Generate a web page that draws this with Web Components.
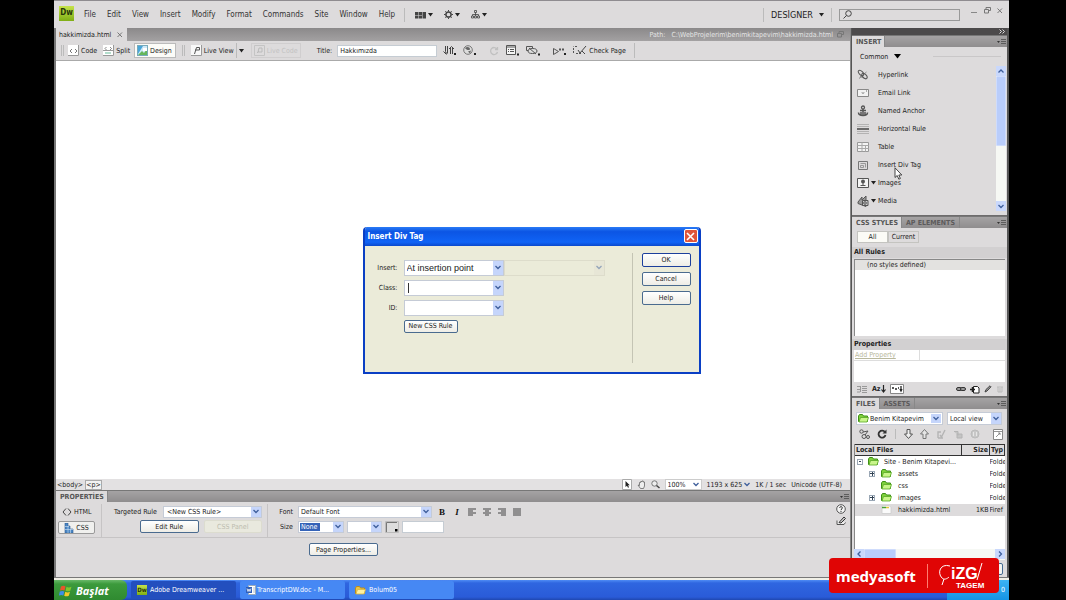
<!DOCTYPE html>
<html lang="tr">
<head>
<meta charset="utf-8">
<title>Adobe Dreamweaver - hakkimizda.html</title>
<style>
html, body { margin: 0; height: 100%; background: #000; }
</style>
</head>
<body>
<dw-desktop></dw-desktop>
<script>
const BASE = `
  *, *::before, *::after { box-sizing: border-box; }
  button, input, select { font: inherit; color: inherit; margin: 0; padding: 0; border: 0; background: none; border-radius: 0; outline: 0; }
  button { white-space: nowrap; display: flex; align-items: center; justify-content: center; gap: 2px; }
  label, a { color: inherit; text-decoration: none; white-space: nowrap; }
  dw-icon { flex: none; }
`;

function define(name, css, render) {
  customElements.define(name, class extends HTMLElement {
    connectedCallback() {
      if (this.shadowRoot) return;
      const root = this.attachShadow({ mode: "open" });
      root.innerHTML = `<style>${BASE}${css}</style>${typeof render === "function" ? render(this) : render}`;
    }
  });
}

const esc = s => s.replace(/&/g, "&amp;").replace(/</g, "&lt;").replace(/"/g, "&quot;");

const S = (w, h, body) => `<svg width="${w}" height="${h}" viewBox="0 0 ${w} ${h}" fill="none" stroke="#555" stroke-width="1">${body}</svg>`;
const ICONS = {
  tri: S(5, 4, '<path d="M0 0h5L2.5 3.5z" fill="#222" stroke="none"/>'),
  bigtri: S(7, 5, '<path d="M0 0h7L3.5 4.5z" fill="#000" stroke="none"/>'),
  layout: S(11, 8, '<path d="M0 1h3.5v3H0zM0 4.500h3.500v3H0zM4 1h3v3H4zM4 4.500h3v3H4zM7.500 1h3.500v6.500H7.500z" fill="#444" stroke="none"/>'),
  gear: S(9, 9, '<circle cx="4.500" cy="4.500" r="2.600" stroke-width="1.500" stroke="#444"/><path d="M4.500 0v1.500M4.500 7.500V9M0 4.500h1.500M7.500 4.500H9M1.300 1.300l1 1M6.700 6.700l1 1M7.700 1.300l-1 1M2.300 6.700l-1 1" stroke="#444"/>'),
  sitemap: S(9, 9, '<path d="M3.500 .5h2v2h-2zM.5 6h2v2h-2zM3.500 6h2v2h-2zM6.500 6h2v2h-2zM4.500 2.500V6M1.500 6V4.500h6V6" stroke="#444" stroke-width=".8"/>'),
  search: S(9, 9, '<circle cx="5.500" cy="3.500" r="2.800" stroke="#444"/><path d="M3.500 5.500L.5 8.500" stroke="#444"/>'),
  min: S(7, 7, '<path d="M0 5.500h6" stroke="#888"/>'),
  restore: S(7, 7, '<path d="M2 2.500V.5h4.500v3H5M.5 2.500h4v3.500h-4z" stroke="#777"/>'),
  close: S(6, 6, '<path d="M.5 .5l4.500 4.500M5 .5L.5 5" stroke="#777"/>'),
  code: S(11, 11, '<rect width="11" height="11" fill="#fff" stroke="none"/><path d="M10.500 0v10.500H0" stroke="#999"/><path d="M4 4L2 6l2 2M7 4l2 2-2 2" stroke="#555" stroke-width=".8"/>'),
  split: S(11, 11, '<rect width="11" height="11" fill="#fff" stroke="none"/><path d="M10.500 0v10.500H0M0 5.500h11" stroke="#999"/><path d="M3.500 2L2 3.500 3.500 5M7 2l1.500 1.500L7 5" stroke-width=".7"/><path d="M2 8h6" stroke="#6b9"/>'),
  design: S(11, 11, '<rect x=".5" y=".5" width="10" height="10" fill="#cfe9f7" stroke="#7ab"/><path d="M1 1h5L1 9z" fill="#4aa6d8" stroke="none"/><path d="M1 10l4-4 2 2 3-4v6z" fill="#65b65c" stroke="none"/><path d="M6 3h4v3H6z" fill="#fff" stroke="none"/>'),
  live: S(11, 11, '<rect width="11" height="11" fill="#f8f8f8" stroke="none"/><path d="M10.500 0v10.500H0" stroke="#999"/><path d="M5.500 2.500h3v2.500H4M5.500 2.500L3.500 9"/>'),
  livecode: S(11, 11, '<path d="M.5 .5h10v10H.5z" stroke="#c4c4c4"/><path d="M5 3h3v4H4zM3 8l2-2" stroke="#bbb"/>'),
  updown: S(13, 11, '<path d="M2.500 1v5.500a2 2 0 0 0 2 2M4.500 1v7M.5 6.500l3 3M7.500 9V2.500M9.500 9V2.500M6 4l2.500-2.500L11 4" stroke="#444"/><path d="M11 8h2v2h-2z" fill="#222" stroke="none"/>'),
  globe: S(13, 11, '<circle cx="5" cy="5" r="4.300" fill="#ddd" stroke="#777"/><path d="M2 3c2-2 5-1 5 1S3 5 2 3zM5 6.500l3-1-1 3z" fill="#666" stroke="none"/><path d="M11 8h2v2h-2z" fill="#222" stroke="none"/>'),
  refreshOff: S(10, 10, '<path d="M8 3a3.500 3.500 0 1 0 .5 3M8.500 1v2.500H6" stroke="#c0c0c0" stroke-width="1.300"/>'),
  viewopts: S(13, 11, '<path d="M.5 .5h9v9h-9zM.5 2h9" fill="#f4f4f4"/><path d="M2 4.500h1M4 4.500h4M2 6.500h1M4 6.500h4"/><path d="M11 8.500h2v2h-2z" fill="#222" stroke="none"/>'),
  visual: S(14, 11, '<path d="M.5 1.500h6v4h-6z"/><ellipse cx="6.500" cy="6" rx="4.500" ry="2.500" fill="#ddd"/><path d="M3 3l7 6"/><path d="M12 8.500h2v2h-2z" fill="#222" stroke="none"/>'),
  validate: S(13, 10, '<path d="M.5 2.500v6l5-3z"/><path d="M6 3.500h5" stroke-width="2" stroke-dasharray="2 1"/><path d="M11 7h2v2h-2z" fill="#222" stroke="none"/>'),
  check: S(14, 11, '<path d="M4 1.500H.5M.5 3v5.500M3 8.500h5" stroke-dasharray="2 1"/><path d="M5 5l2 3 6-7" stroke="#444"/><path d="M9 6l3 3" stroke="#444"/>'),
  menu: S(9, 7, '<path d="M0 3h3L1.500 5z" fill="#333" stroke="none"/><path d="M4 1.500h5M4 3.500h5M4 5.500h5" stroke="#555" stroke-width=".9"/>'),
  collapse: S(6, 5, '<path d="M.5 .5l2 2-2 2M3.500 .5l2 2-2 2" stroke="#ddd"/>'),
  hyperlink: S(12, 12, '<ellipse cx="4" cy="4" rx="3.300" ry="1.800" transform="rotate(45 4 4)"/><ellipse cx="7.500" cy="7" rx="3.300" ry="1.800" transform="rotate(45 7.500 7)"/><path d="M3 7.500l6 2.500M2 9.500L9.500 3" stroke-width=".6"/>'),
  email: S(12, 12, '<path d="M.5 2.500h11v7H.5z" fill="#f2f2f2" stroke="#888"/><path d="M4 5.500l2 1.500 2-1.500z" fill="#888" stroke="none"/><path d="M9 4h1" stroke="#666"/>'),
  anchor: S(12, 12, '<circle cx="6" cy="2.500" r="1.500" stroke-width="1.300"/><path d="M6 4v6.500M3 5.500h6M1.500 7.500c0 4 9 4 9 0M4 7v3M8 7v3" stroke-width="1.500"/>'),
  hr: S(12, 12, '<path d="M.5 1.500h11M.5 3.500h11M.5 8.500h11M.5 10.500h11" stroke="#888" stroke-dasharray="1 1"/><path d="M0 6h12" stroke="#444" stroke-width="1.500"/>'),
  table: S(12, 12, '<path d="M.5 1.500h11v9H.5z" fill="#f4f4f4" stroke="#999"/><path d="M.5 4.500h11M.5 7.500h11M5 1.500v9M8.500 4v6.500" stroke="#aaa"/>'),
  div: S(12, 12, '<path d="M1.500 2.500h9v8h-9z" stroke="#777"/><path d="M3.500 4.500h5v4M3.500 6.500h3v2h-3z" stroke="#888" stroke-width=".8"/>'),
  image: S(12, 12, '<path d="M.5 1.500h11v9H.5z" fill="#f4f4f4"/><circle cx="6" cy="4.500" r="2" fill="#555" stroke="none"/><path d="M6 5v4M3.500 8.500h5"/>'),
  media: S(12, 12, '<path d="M1 7l4-5v3l4-4v10.500L1 8.500z" fill="#999"/><path d="M5.500 5.500h5.500v5H5.500z" fill="#ccc"/><circle cx="8" cy="8" r="1.300"/>'),
  catview: S(11, 8, '<path d="M0 1.500h3M0 4.500h3M0 7h3M5 1.500h5M5 3.500h5M5 5.500h5M5 7.500h5M3.500 1v6" stroke="#888" stroke-width=".8"/>'),
  arrowdn: S(5, 8, '<path d="M2.500 0v7M.5 4.500l2 2.500 2-2.500" stroke="#222" stroke-width="1.200"/>'),
  stars: S(14, 10, '<path d="M.5 .5h13v9H.5z" fill="#fff" stroke="#888"/><path d="M2 4h2M5 5h2M8 4h1M11 2v5M10 5l1 2 1-2" stroke="#222" stroke-width="1.300"/>'),
  chain: S(10, 8, '<rect x=".5" y="2.500" width="5" height="3" rx="1.500" fill="#999" stroke="#333"/><rect x="4.500" y="2.500" width="5" height="3" rx="1.500" fill="#999" stroke="#333"/>'),
  newdoc: S(10, 9, '<path d="M3.500 1.500h4l1.500 1.500v5H3.500z" fill="#fff" stroke="#222"/><path d="M0 4.500h5M2.500 2v5" stroke="#222" stroke-width="1.500"/>'),
  pencil: S(8, 8, '<path d="M1 7l1-2.500L6 .8l1 1L3 6z" fill="#999" stroke="#444"/>'),
  trash: S(8, 8, '<path d="M1 2h6M2 2v5h4V2M4 3v4" stroke="#bbb"/>'),
  folder: S(11, 9, '<path d="M.5 7.500V2l1-1.500h3L5.500 2h4v5.500z" fill="#7fd13c" stroke="#3f8f16"/><path d="M2.500 3.500h8l-1.500 4.500H1z" fill="#c9f58a" stroke="#58a824" stroke-width=".8"/>'),
  yfolder: S(11, 9, '<path d="M.5 7.500V2l1-1.500h3L5.500 2h4v5.500z" fill="#e9c44a" stroke="#b98d1c"/><path d="M2.500 3.500h8l-1.500 4.500H1z" fill="#fff1a0" stroke="#d9b53c" stroke-width=".8"/>'),
  page: S(11, 9, '<path d="M1 .5h7l2 2v6H1z" fill="#fafafa" stroke="#ccc" stroke-width=".8"/><path d="M1 2.500h4" stroke="#46a038" stroke-width="1.500"/><path d="M5 2.500h3" stroke="#e3c840" stroke-width="1.500"/>'),
  connect: S(11, 11, '<circle cx="2.500" cy="2.500" r="1.700"/><circle cx="5" cy="7.500" r="2"/><circle cx="9" cy="8" r="1.500"/><path d="M4 3l5-1M9 2L6 6"/>'),
  refresh: S(10, 10, '<path d="M8 3.200A3.500 3.500 0 1 0 8.500 6" stroke="#333" stroke-width="1.800"/><path d="M9.500 .5v4h-4z" fill="#333" stroke="none"/>'),
  get: S(9, 10, '<path d="M3 .5h3v4.500h2.500l-4 4.500-4-4.500H3z" fill="#eee" stroke="#555"/>'),
  put: S(9, 10, '<path d="M3 9.500h3V5h2.500l-4-4.500L.5 5H3z" fill="#e4e4e4" stroke="#777"/>'),
  checkout: S(10, 10, '<path d="M2 9V3h3M2 9h5M4 6l1.500 2L9 1" stroke="#b4b4b4" stroke-width="1.400"/>'),
  lock: S(10, 10, '<path d="M1 2.500h4v4M4 5h5v4H4z" fill="#c4c4c4" stroke="#b4b4b4"/>'),
  sync: S(10, 10, '<circle cx="5" cy="5" r="4" fill="#c8c8c8" stroke="#bbb"/><path d="M3.500 3v4M6.500 3v4" stroke="#e6e6e6"/>'),
  expand: S(10, 11, '<path d="M.5 .5h9v10h-9z" fill="#fff" stroke="#888"/><path d="M1 2.500h8M3 8l4-4M5 4h2v2" stroke="#777" stroke-width=".8"/>'),
  pointer: S(10, 11, '<path d="M.5 .5h9v10h-9z" fill="#fff" stroke="#aaa"/><path d="M3.500 2v6l1.500-1.200 1 2 1-.5-1-2h1.800z" fill="#222" stroke="none"/>'),
  hand: S(9, 9, '<path d="M1 5l1.500.5V2.500h1.200V1.500H5V1h1.200v1h1.300v4L6.500 8.500H3.500z" fill="#eee" stroke="#666" stroke-width=".8"/>'),
  zoom: S(9, 9, '<circle cx="3.500" cy="3.500" r="2.700" fill="#eee" stroke="#777"/><path d="M5.500 5.500L8.500 8" stroke="#444" stroke-width="1.500"/>'),
  html: S(10, 8, '<path d="M4 .5L1 4l3 3.500M6 .5L9 4 6 7.500" stroke="#444"/>'),
  css: S(10, 10, '<path d="M1 0h3v3h2v3h3v4H1z" fill="#4a86c4" stroke="#2c5c94" stroke-width=".6"/><path d="M1 3.500h4M1 6.500h8M4 3v7M6.500 6v4" stroke="#cfe2f5" stroke-width=".6"/>'),
  left: S(8, 8, '<path d="M0 1h8M0 3h5M0 5h8M0 7h5" stroke="#444" stroke-width="1.200"/>'),
  center: S(8, 8, '<path d="M0 1h8M2 3h4M0 5h8M2 7h4" stroke="#444" stroke-width="1.200"/>'),
  right: S(8, 8, '<path d="M0 1h8M3 3h5M0 5h8M3 7h5" stroke="#444" stroke-width="1.200"/>'),
  justify: S(8, 8, '<path d="M0 1h8M0 3h8M0 5h8M0 7h8" stroke="#444" stroke-width="1.200"/>'),
  help: S(10, 10, '<circle cx="5" cy="5" r="4.300" fill="#f4f4f4"/><path d="M3.700 4c0-2 2.800-1.700 2.600 0C6.200 5 5 5 5 6.200M5 7v1" stroke="#333"/>'),
  edittag: S(11, 10, '<path d="M1 4.500v4h7l1.500-2" fill="#eee"/><path d="M3 6.500L8 1l1.500 1.500L5 7z" fill="#ccc" stroke="#333"/>'),
  swatch: S(14, 12, '<path d="M.5 .5h13v11H.5z" fill="#ddd" stroke="#bbb"/><path d="M1.500 11V1.500H12" stroke="#777"/><path d="M10 8h2.500v2.500H10z" fill="#000" stroke="none"/>'),
  cursor: S(9, 13, '<path d="M1 .8v9.700l2.200-2 1.600 3.700 1.600-.7-1.600-3.500h3z" fill="#fff" stroke="#333" stroke-width=".9"/>'),
  x: S(9, 9, '<path d="M1 1l7 7M8 1L1 8" stroke="#fff" stroke-width="1.600"/>'),
  xp: S(14, 13, '<path d="M2 2.500c2-1 3-1 4.500 0l-1 4c-1.500-.8-2.700-.8-4.500 0z" fill="#e8552c" stroke="none"/><path d="M7.500 2.800c1.500.8 3 .8 5 0l-1.200 4c-1.800.7-3 .7-4.700 0z" fill="#7fc72c" stroke="none"/><path d="M.8 7.500c1.800-.8 3-.8 4.500 0l-1 4c-1.400-.8-2.700-.8-4.500 0z" fill="#3f8de8" stroke="none"/><path d="M6.300 7.800c1.500.8 3 .8 4.700 0l-1.200 4c-1.500.7-3 .7-4.600 0z" fill="#f6c928" stroke="none"/>'),
  word: S(10, 10, '<path d="M2.500 .5h7v9h-7z" fill="#fff" stroke="#9ab"/><path d="M0 2h6v6H0z" fill="#2f5fb8" stroke="none"/><path d="M1 3.500l1 3 1-2.500 1 2.500 1-3" stroke="#fff" stroke-width=".8"/><path d="M7 3h2M7 5h2M7 7h2" stroke="#89a" stroke-width=".6"/>'),
  chevL: S(5, 6, '<path d="M3.500 .5L1 3l2.500 2.500" stroke="#3e5f9c" stroke-width="1.300"/>'),
  chevR: S(5, 6, '<path d="M1 .5L3.500 3 1 5.500" stroke="#3e5f9c" stroke-width="1.300"/>'),
  chevU: S(6, 5, '<path d="M.5 3.500L3 1l2.500 2.500" stroke="#3e5f9c" stroke-width="1.300"/>'),
  chevD: S(6, 5, '<path d="M.5 1L3 3.500 5.500 1" stroke="#3e5f9c" stroke-width="1.300"/>')
};
define("dw-icon", `:host{display:block;line-height:0} svg{display:block}`, el => ICONS[el.getAttribute("name")]);

/* square "Dw" product mark */
define("dw-logo", `
  :host{display:block;width:var(--logo,15px);height:var(--logo,15px);flex:none}
  div{display:flex;align-items:center;justify-content:center;height:100%;background:linear-gradient(#c6e24a,#7fae16);color:#26360a;font-weight:bold;font-size:var(--logo-text,8px);line-height:1}
`, `<div>Dw</div>`);

/* drop-down with an XP-style arrow; kind="edit" is an editable combo box */
define("dw-combo", `
  :host{display:flex;align-items:center;gap:var(--gap,4px)}
  label{flex:none;width:var(--label-width,auto);text-align:right}
  .box{position:relative;display:flex;flex:1;min-width:0;height:var(--h,12px);background:#fff;border:1px solid var(--edge,#c5cbd6)}
  .box.off{background:none;--arrow:#e4e3d4;border-color:#dddccb}
  select,input{appearance:none;width:100%;min-width:0;padding-left:var(--pad,2px);font:var(--text,inherit);opacity:1;color:#222}
  .box > span{flex:none;display:grid;place-content:center;width:10px;background:var(--arrow,#c5d5fb)}
  .off > span{opacity:.5}
  .sel select{background:linear-gradient(#3563b8,#3563b8) 1px 1px/20px 8px no-repeat;color:#fff}
  .caret input{background:linear-gradient(#333,#333) 3px 2px/1px 10px no-repeat}
`, el => {
  const label = el.getAttribute("label") || "", v = esc(el.getAttribute("value") || ""), off = el.hasAttribute("disabled") ? "disabled" : "";
  const name = el.getAttribute("name-hint") || label;
  const cls = ["box", off && "off", el.hasAttribute("marked") && "sel", el.hasAttribute("caret") && "caret"].filter(Boolean).join(" ");
  const ctl = el.getAttribute("kind") === "edit"
    ? `<input id="c" type="text" aria-label="${name}" value="${v}">`
    : `<select id="c" aria-label="${name}" ${off}><option>${v}</option></select>`;
  return `${label ? `<label for="c">${label}</label>` : ""}<div class="${cls}">${ctl}<span><dw-icon name="chevD"></dw-icon></span></div>`;
});

/* XP push button */
define("dw-button", `
  :host{display:block}
  button{width:100%;height:var(--h,13px);border:1px solid var(--edge,#4a6b8f);border-radius:2px;background:linear-gradient(#fff,#eeede6);padding:0 3px;color:#222}
  button:disabled{border-color:#dcdccf;background:#e9e9de;color:#bcbcae}
`, el => `<button type="button" ${el.hasAttribute("disabled") ? "disabled" : ""}><slot></slot></button>`);

define("dw-menubar", `
  :host{display:flex;align-items:center;height:28px;padding:0 6px 0 5px;background:#dddbdc;border-top:1px solid #8f8c90;font-size:8px;color:#333}
  dw-logo{margin-bottom:3px}
  nav{display:flex;gap:11px;margin-left:10px}
  .icons{display:flex;gap:11px;margin-left:9px;padding-left:10px;border-left:1px solid #bbb;height:14px;align-items:center}
  .icons button{gap:2px}
  .space{flex:1}
  .role{border-left:1px solid #bbb;border-right:1px solid #bbb;height:14px;padding:0 7px;gap:6px;color:#222;font-size:9px}
  .find{display:flex;align-items:center;gap:2px;margin:0 11px 0 7px;width:121px;height:12px;border:1px solid #999;padding-left:3px}
  .find input{flex:1;min-width:0}
  .win{display:flex;gap:6px;align-self:flex-start;margin-top:6px}
`, `<dw-logo></dw-logo>
  <nav>${["File","Edit","View","Insert","Modify","Format","Commands","Site","Window","Help"].map(t => `<a href="#">${t}</a>`).join("")}</nav>
  <div class="icons">${["layout","gear","sitemap"].map(n => `<button type="button" aria-label="${n}"><dw-icon name="${n}"></dw-icon><dw-icon name="tri"></dw-icon></button>`).join("")}</div>
  <div class="space"></div>
  <button type="button" class="role">DESİGNER <dw-icon name="tri"></dw-icon></button>
  <div class="find"><dw-icon name="search"></dw-icon><input type="text" aria-label="Search"></div>
  <div class="win">${["min","restore","close"].map(n => `<button type="button" aria-label="${n}"><dw-icon name="${n}"></dw-icon></button>`).join("")}</div>`);

define("dw-doctabs", `
  :host{display:flex;align-items:center;height:13px;background:linear-gradient(#8b898a,#a3a1a2);color:#e4e4e4;padding-right:6px}
  button{align-self:stretch;background:#dddbdc;color:#222;padding:0 4px 0 3px;gap:6px}
  .path{margin-left:auto;display:flex;gap:4px}
  .path span{margin-right:2px}
`, `<button type="button">hakkimizda.html <dw-icon name="close"></dw-icon></button>
  <div class="path"><span>Path:</span> C:\\WebProjelerim\\benimkitapevim\\hakkimizda.html <dw-icon name="restore"></dw-icon></div>`);

define("dw-toolbar", `
  :host{display:flex;align-items:center;height:20px;padding-left:5px;background:#dddbdc;border-bottom:1px solid #aaa;color:#222}
  .grip{width:3px;height:11px;border:solid #bbb;border-width:0 1px}
  button{height:15px;padding:0 2px}
  .views{display:flex;margin-left:2px;gap:2px}
  .on{background:#fcfcf8;border:1px solid #bbb;padding:0 3px 0 2px}
  .live{display:flex;margin:0 0 0 4px}
  .live .off{color:#c2c2c2;border:1px solid #d0cecf;margin-left:4px}
  .drop{width:11px;border-left:1px solid #bbb}
  .views + .grip{margin-left:6px}
  .title{display:flex;align-items:center;gap:5px;margin:0 4px 0 16px}
  .title input{width:100px;height:12px;background:#fff;border:1px solid #c5ccd3;padding-left:2px}
  .tools{display:flex;align-items:center;gap:3px}
  .tools button:nth-child(3){margin-left:6px}
  .tools button:nth-child(6){margin-left:6px}
  .end{width:1px;height:15px;background:#bbb;margin-left:6px}
`, `<div class="grip"></div>
  <div class="views"><button type="button"><dw-icon name="code"></dw-icon>Code</button><button type="button"><dw-icon name="split"></dw-icon>Split</button><button type="button" class="on"><dw-icon name="design"></dw-icon>Design</button></div>
  <div class="grip"></div>
  <div class="live"><button type="button"><dw-icon name="live"></dw-icon>Live View</button><button type="button" class="drop" aria-label="Live view options"><dw-icon name="tri"></dw-icon></button><button type="button" class="off" disabled><dw-icon name="livecode"></dw-icon>Live Code</button></div>
  <div class="title"><label for="t">Title:</label><input id="t" type="text" value="Hakkımızda"></div>
  <div class="tools">${["updown","globe","refreshOff","viewopts","visual","validate"].map(n => `<button type="button" aria-label="${n}"><dw-icon name="${n}"></dw-icon></button>`).join("")}<button type="button"><dw-icon name="check"></dw-icon>Check Page</button></div>
  <div class="end"></div>`);

define("dw-status", `
  :host{display:flex;align-items:center;height:11px;background:#e3e1e2;color:#222;padding:0 8px 0 1px;gap:2px;white-space:nowrap}
  .here{border:1px solid #aaa;background:#f2f2f2;line-height:8px}
  .info{margin-left:auto;display:flex;align-items:center;gap:5px}
  .info dw-combo{width:37px;--h:11px;--arrow:#fff;--edge:#ccc}
`, `<a href="#">&lt;body&gt;</a><a href="#" class="here">&lt;p&gt;</a>
  <div class="info"><dw-icon name="pointer"></dw-icon><dw-icon name="hand"></dw-icon><dw-icon name="zoom"></dw-icon>
  <dw-combo name-hint="Zoom" value="100%"></dw-combo><button type="button">1193 x 625 <dw-icon name="chevD"></dw-icon></button><span>1K / 1 sec</span><span>Unicode (UTF-8)</span></div>`);

/* tab strip plus slotted body */
define("dw-panel", `
  :host{display:flex;flex-direction:column;min-height:0}
  .tabs{display:flex;flex:none;height:12px;background:linear-gradient(#a5a3a4,#8f8d8e);padding-right:1px;border-top:1px solid #777}
  .tabs button{padding:0 4px;font-size:7px;font-weight:bold;color:#5c5a5b;border-right:1px solid #888}
  .tabs .on{background:#dddbdc;color:#555;padding-right:3px}
  .tabs .m{margin-left:auto;padding:0;border:0}
  .body{flex:1;min-height:0;display:flex;flex-direction:column;background:#dddbdc}
`, el => `<div class="tabs" role="tablist">${el.getAttribute("tabs").split("|").map((t, i) => `<button type="button" role="tab" class="${i ? "" : "on"}">${t}</button>`).join("")}<button type="button" class="m" aria-label="Panel menu"><dw-icon name="menu"></dw-icon></button></div><div class="body"><slot></slot></div>`);

define("dw-properties", `
  :host{display:block;color:#222}
  dw-panel{height:87px}
  .top{display:flex;height:36px;padding:2px 3px 0 2px;border-bottom:1px solid #c6c4c5}
  .modes{display:grid;grid-template-rows:13px 13px;row-gap:3px;width:43px;padding-top:1px}
  .modes button{width:37px}
  .modes button:first-child{justify-content:flex-start;padding-left:4px}
  .modes .on{background:#f0f0ee;border:1px solid #999;border-radius:2px}
  .rule{display:grid;grid-template-rows:13px 13px;row-gap:2px;width:167px;padding:1px 5px 0 12px;border:solid #c6c4c5;border-width:0 1px}
  .rule > div{display:flex;gap:5px;padding-left:26px}
  .rule > div dw-button{flex:1}
  .rule > dw-combo{--gap:6px;--pad:3px}
  .font{display:grid;grid-template-rows:13px 13px;row-gap:2px;padding:1px 0 0 8px}
  .row{display:flex;align-items:center;gap:3px}
  .font dw-combo{--gap:5px;--label-width:17px}
  .family{width:156px}
  .size{width:68px}
  .unit{width:35px}
  .row input{width:42px;height:12px;background:#fff;border:1px solid #c5ccd3}
  .fmt{display:flex;gap:7px;margin-left:3px;align-items:center;color:#111}
  .fmt button{width:8px;font:bold 9px "Liberation Serif",serif}
  .side{margin-left:auto;display:grid;align-content:start;gap:2px}
  .below{padding:5px 0 0 253px}
  .below dw-button{width:69px}
`, `<dw-panel tabs="PROPERTİES"><div class="top">
   <div class="modes"><button type="button"><dw-icon name="html"></dw-icon>HTML</button><button type="button" class="on"><dw-icon name="css"></dw-icon>CSS</button></div>
   <div class="rule"><dw-combo label="Targeted Rule" value="&lt;New CSS Rule&gt;"></dw-combo><div><dw-button>Edit Rule</dw-button><dw-button disabled>CSS Panel</dw-button></div></div>
   <div class="font"><div class="row"><dw-combo class="family" label="Font" value="Default Font"></dw-combo>
     <div class="fmt"><button type="button">B</button><button type="button"><i>I</i></button>${["left","center","right","justify"].map(n => `<button type="button" aria-label="${n}"><dw-icon name="${n}"></dw-icon></button>`).join("")}</div></div>
   <div class="row"><dw-combo class="size" label="Size" value="None" marked></dw-combo><dw-combo class="unit" name-hint="Unit"></dw-combo><dw-icon name="swatch"></dw-icon><input type="text" aria-label="Color"></div></div>
   <div class="side"><dw-icon name="help"></dw-icon><dw-icon name="edittag"></dw-icon></div>
  </div><div class="below"><dw-button>Page Properties...</dw-button></div></dw-panel>`);

/* one row of the Insert panel */
define("dw-tool", `
  :host{display:block;position:relative;height:18px}
  button{height:18px;width:100%;justify-content:flex-start;gap:1px;padding-left:5px}
  span{width:7px;display:block;padding-left:1px}
  .cur{position:absolute;left:42px;top:11px;z-index:2}
`, el => `<button type="button"><dw-icon name="${el.getAttribute("icon")}"></dw-icon><span>${el.hasAttribute("more") ? '<dw-icon name="tri"></dw-icon>' : ""}</span><slot></slot></button>${el.hasAttribute("hovered") ? '<dw-icon class="cur" name="cursor"></dw-icon>' : ""}`);

define("dw-scroll", `
  :host{display:flex;flex-direction:column;background:#f6f8f4;width:10px}
  :host([across]){flex-direction:row;width:auto;height:11px}
  i{flex:none;display:grid;place-content:center;width:10px;height:10px;background:#c9d8fc}
  b{flex:0 0 var(--thumb);background:#b9cdfb;border:1px solid #cfdcfc;border-radius:1px}
  em{flex:1}
`, el => { const a = el.hasAttribute("across"); return `<i><dw-icon name="${a ? "chevL" : "chevU"}"></dw-icon></i><b></b><em></em><i><dw-icon name="${a ? "chevR" : "chevD"}"></dw-icon></i>`; });

define("dw-insert", `
  :host{display:block}
  dw-panel{height:180px;position:relative;z-index:1}
  .cat{display:flex;align-items:center;height:19px;padding-left:8px}
  .cat button{gap:6px}
  .cat::after{content:"";flex:1;margin:0 6px 0 32px;height:1px;background:#c9c7c8}
  .list{flex:1;display:flex;min-height:0}
  .items{flex:1}
  dw-scroll{margin:0 1px 4px 0;--thumb:70px}
`, `<dw-panel tabs="INSERT"><div class="cat"><button type="button">Common <dw-icon name="bigtri"></dw-icon></button></div>
  <div class="list"><div class="items">
   <dw-tool icon="hyperlink">Hyperlink</dw-tool><dw-tool icon="email">Email Link</dw-tool><dw-tool icon="anchor">Named Anchor</dw-tool><dw-tool icon="hr">Horizontal Rule</dw-tool><dw-tool icon="table">Table</dw-tool><dw-tool icon="div" hovered>Insert Div Tag</dw-tool><dw-tool icon="image" more>Images</dw-tool><dw-tool icon="media" more>Media</dw-tool>
  </div><dw-scroll></dw-scroll></div></dw-panel>`);

define("dw-styles", `
  :host{display:block;color:#222}
  dw-panel{height:180px}
  .modes{display:flex;padding:3px 5px;height:19px}
  .modes button{height:12px;width:31px;border:1px solid #c4c4c0}
  .modes .on{background:#fbfbf6}
  h3{margin:0;font-size:7px;line-height:11px;padding-left:2px;background:#d2d0d1}
  .rules{flex:1;background:#fff;margin:1px 2px 3px;border:1px solid #888;border-width:1px 0 0 1px}
  .rules div{background:#e3e2e0;padding-left:12px;line-height:10px}
  .props{height:32px;background:#fff;margin:0 2px;color:#b8b89c}
  .props div{display:grid;grid-template-columns:66px 1fr;border-bottom:1px solid #ddd;line-height:10px}
  .props a{border-right:1px solid #ddd;padding-left:1px;text-decoration:underline}
  .foot{display:flex;align-items:center;gap:4px;height:14px;padding:0 3px 0 5px;flex:none}
  .foot button:nth-child(4){margin-left:auto}
  .az{gap:0;font-weight:bold}
`, `<dw-panel tabs="CSS STYLES|AP ELEMENTS"><div class="modes"><button type="button" class="on">All</button><button type="button">Current</button></div>
  <h3>All Rules</h3><div class="rules"><div>(no styles defined)</div></div>
  <h3>Properties</h3><div class="props"><div><a href="#">Add Property</a></div></div>
  <div class="foot"><button type="button" aria-label="Category view"><dw-icon name="catview"></dw-icon></button><button type="button" class="az">Az<dw-icon name="arrowdn"></dw-icon></button>${["stars","chain","newdoc","pencil","trash"].map(n => `<button type="button" aria-label="${n}"><dw-icon name="${n}"></dw-icon></button>`).join("")}</div></dw-panel>`);

define("dw-files", `
  :host{display:block;flex:1;min-height:0;color:#222}
  dw-panel{height:100%}
  .picks{display:flex;gap:4px;padding:3px 5px 1px 4px}
  .site{flex:none;width:87px;display:flex;align-items:center;background:#fff;padding-left:1px;border:1px solid #c5cbd6}
  .site dw-combo{flex:1;--h:11px;--edge:transparent;--pad:0px}
  .picks > dw-combo{flex:1;--h:13px}
  .bar{display:flex;align-items:center;gap:7px;height:16px;margin-bottom:2px;padding:0 4px 0 7px}
  .bar button:nth-child(3){margin-left:1px;padding-left:8px;border-left:1px solid #bbb}
  .bar button:last-child{margin-left:auto}
  .bar button{flex:none}
  .tree{flex:1;min-height:0;margin:0 2px;background:#fff;overflow:hidden;border-left:1px solid #888}
  table{border-collapse:collapse;width:100%;table-layout:fixed}
  th{height:11px;background:#dddbdc;border:1px solid #333;border-left:0;text-align:left;padding:0 0 0 1px;line-height:9px}
  td{height:12px;padding:0;white-space:nowrap;overflow:hidden;line-height:10px}
  th.n,td.n{text-align:right;padding:0 1px 0 0}
  col:nth-child(2){width:28px} col:nth-child(3){width:15px}
  td div{display:flex;align-items:center;gap:6px}
  .kid{padding-left:14px}
  .root{padding-left:2px;gap:5px}
  u{flex:none;width:6px;height:6px;border:1px solid #9aa7b5;text-decoration:none;background:linear-gradient(#345,#345) center/2px 1px no-repeat #fff}
  u.plus{background:linear-gradient(#345,#345) center/4px 1px no-repeat,linear-gradient(#345,#345) center/1px 4px no-repeat,#fff}
  u.none{border-color:transparent;background:none}
  tr.on{background:#dddbdc}
  dw-scroll{margin:0 2px;--thumb:32px}
  .log{display:flex;height:17px;align-items:center;justify-content:flex-end;padding-right:4px}
  .log button{width:30px;height:12px;border:1px solid #456a90;background:#f4f4f0;border-radius:2px}
`, `<dw-panel tabs="FILES|ASSETS"><div class="picks"><div class="site"><dw-icon name="folder"></dw-icon><dw-combo name-hint="Site" value="Benim Kitapevim"></dw-combo></div><dw-combo name-hint="View" value="Local view"></dw-combo></div>
  <div class="bar">${["connect","refresh","get","put","checkout","lock","sync","expand"].map(n => `<button type="button" aria-label="${n}"><dw-icon name="${n}"></dw-icon></button>`).join("")}</div>
  <div class="tree"><table><colgroup><col><col><col></colgroup><thead><tr><th>Local Files</th><th class="n">Size</th><th>Typ</th></tr></thead><tbody>
   <tr><td><div class="root"><u></u><dw-icon name="folder"></dw-icon>Site - Benim Kitapevi...</div></td><td></td><td>Folde</td></tr>
   ${[["plus","folder","assets","","Folde"],["none","folder","css","","Folde"],["plus","folder","images","","Folde"],["none","page","hakkimizda.html","1KB","Firef"]].map(r => `<tr class="${r[3] ? "on" : ""}"><td><div class="kid"><u class="${r[0]}"></u><dw-icon name="${r[1]}"></dw-icon>${r[2]}</div></td><td class="n">${r[3]}</td><td>${r[4]}</td></tr>`).join("")}
  </tbody></table></div><dw-scroll across></dw-scroll><div class="log"><button type="button" aria-label="Log"></button></div></dw-panel>`);

define("dw-dock", `
  :host{display:flex;flex-direction:column;width:158px;background:#6e6c6d;border:solid #555;border-width:0 2px 0 1px;color:#222}
  .head{flex:none;height:7px;background:#4c4a4b;display:flex;justify-content:flex-end;padding:1px 2px}
  dw-styles,dw-files{margin-top:1px}
`, `<div class="head"><dw-icon name="collapse"></dw-icon></div><dw-insert></dw-insert><dw-styles></dw-styles><dw-files></dw-files>`);

define("dw-dialog", `
  :host{display:block;width:338px;border:2px solid #0a3fc4;border-top:0;border-radius:4px 4px 0 0;background:#ebebd9;color:#222;overflow:hidden}
  header{display:flex;align-items:center;justify-content:space-between;height:19px;padding:0 1px 0 3px;background:linear-gradient(#2a7bf6,#0c55e4 25%,#1064f6 80%,#0a48cc);color:#fff}
  h2{margin:0;font-size:8px}
  header button{width:14px;height:14px;background:#e0553a;border:1px solid #fff;border-radius:2px}
  .body{display:flex;height:126px;padding:7px 9px 0 7px}
  .fields{flex:1;display:flex;flex-direction:column;gap:4px;padding-top:7px}
  .row{display:flex}
  dw-combo{width:132px;--h:16px;--gap:6px;--label-width:26px;--text:9px "Liberation Sans",sans-serif}
  .row dw-combo + dw-combo{width:101px}
  .new{width:54px;margin:0 0 0 32px}
  .acts{width:58px;border-left:1px solid #c4c4b4;padding-left:9px;height:110px;display:grid;gap:5px;align-content:start}
  .acts dw-button{--h:14px;width:49px}
  .acts dw-button:first-child{--edge:#1c3f9c}
`, `<header><h2>Insert Div Tag</h2><button type="button" aria-label="Close"><dw-icon name="x"></dw-icon></button></header>
  <div class="body"><div class="fields"><div class="row"><dw-combo label="Insert:" value="At insertion point"></dw-combo><dw-combo name-hint="Target" disabled></dw-combo></div>
  <dw-combo kind="edit" label="Class:" caret></dw-combo><dw-combo kind="edit" label="ID:"></dw-combo><dw-button class="new">New CSS Rule</dw-button></div>
  <div class="acts"><dw-button>OK</dw-button><dw-button>Cancel</dw-button><dw-button>Help</dw-button></div></div>`);

define("xp-taskbar", `
  :host{display:flex;height:20px;background:linear-gradient(#4f8cf5,#2f66e0 15%,#2a5bd8 85%,#1f47b0);color:#fff;gap:4px}
  .start{width:73px;padding-right:2px;gap:3px;justify-content:flex-start;padding-left:5px;background:linear-gradient(#68b868,#3c9a3c 20%,#2f8a30);border-radius:0 6px 6px 0;font:italic bold 11px "Open Sans",sans-serif}
  .task{width:105px;justify-content:flex-start;padding-left:6px;gap:3px;background:#4688f4;border-radius:2px;margin:1px 0}
  .task.on{background:#234fbe}
  .task:nth-of-type(3){gap:1px}
  dw-logo{--logo:10px;--logo-text:6px}
  .tray{margin-left:auto;width:62px;background:linear-gradient(#3cb4f4,#1593e4);display:flex;align-items:center;justify-content:flex-end;padding-right:4px}
`, `<button type="button" class="start"><dw-icon name="xp"></dw-icon>Başlat</button>
  <button type="button" class="task on"><dw-logo></dw-logo>Adobe Dreamweaver ...</button>
  <button type="button" class="task"><dw-icon name="word"></dw-icon>TranscriptDW.doc - M...</button>
  <button type="button" class="task"><dw-icon name="yfolder"></dw-icon>Bolum05</button><div class="tray">0</div>`);

/* sponsor badge over the lower right corner */
define("brand-badge", `
  :host{display:flex;align-items:center;width:170px;height:35px;background:#e00505;border-radius:4px;color:#fff}
  .m{font:bold 15px "Noto Sans",sans-serif;width:99px;padding-left:7px;border-right:1px solid #ff7d70;line-height:24px}
  .c{flex:1;position:relative;height:35px;padding:8px 0 0 23px;display:flex;flex-direction:column;align-items:flex-start}
  .iz{font:bold 16px/16px "Liberation Sans",sans-serif}
  .tg{font:bold 8px/8px "Liberation Sans",sans-serif;margin-left:5px}
  svg{position:absolute;left:0;top:0}
`, `<div class="m">medyasoft</div><div class="c"><svg width="70" height="35" fill="none" stroke="#fff"><path d="M22 8C12 5 9 15 14 20c2 2 5 1 7-1M16 21l-2 6M54 5l-5 17"/></svg><span class="iz">iZG</span><span class="tg">TAGEM</span></div>`);

define("dw-desktop", `
  :host{display:flex;flex-direction:column;position:relative;min-height:100vh;margin:0 57px 0 54px;background:#dddbdc;font:7px "DejaVu Sans Condensed","DejaVu Sans",sans-serif}
  main{flex:1;display:flex;min-height:0}
  .work{flex:1;min-width:0;display:flex;flex-direction:column;border-left:2px solid #777;border-right:1px solid #888}
  .page{flex:1;background:#fff}
  .foot{height:3px;background:#f0efe6;border-top:1px solid #777}
  .modal{position:absolute;inset:0;display:grid;place-content:center;pointer-events:none}
  brand-badge{position:absolute;right:10px;bottom:7px}
`, `<dw-menubar></dw-menubar><main><div class="work"><dw-doctabs></dw-doctabs><dw-toolbar></dw-toolbar><div class="page"></div><dw-status></dw-status><dw-properties></dw-properties></div><dw-dock></dw-dock></main>
  <div class="foot"></div><xp-taskbar></xp-taskbar><div class="modal"><dw-dialog></dw-dialog></div><brand-badge></brand-badge>`);
</script>
</body>
</html>
